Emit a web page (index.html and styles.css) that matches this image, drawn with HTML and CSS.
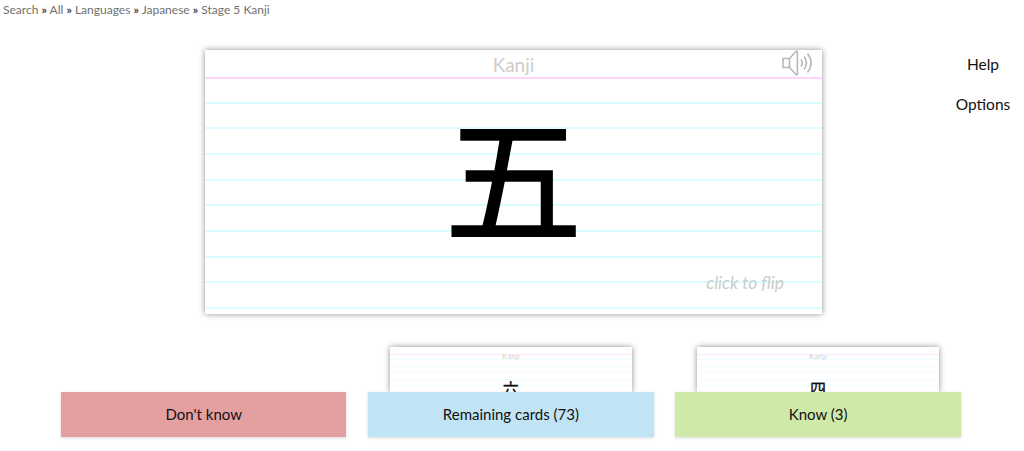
FILE: index.html
```html
<!DOCTYPE html>
<html>
  <head>
    <link rel="stylesheet" href="styles.css">
  </head>
  <body>
    <nav class="crumbs">
      <a>Search</a> <b>»</b> <a>All</a> <b>»</b> <a>Languages</a> <b>»</b> <a>Japanese</a> <b>»</b> <a>Stage 5 Kanji</a>
    </nav>

    <main class="study">
      <section class="card">
        <div class="card-head">
          <span class="card-title">Kanji</span>
          <svg class="sound" width="31" height="26" viewBox="0 0 31 26" fill="none" stroke="#b8b8b8" stroke-width="1.6">
            <path d="M1 8.500h6.500v9H1z"/>
            <path d="M7.500 8.500L14 1.500c.8-.6 1.400-.2 1.400.8v21.400c0 1-.6 1.400-1.400.8l-6.500-7"/>
            <path d="M19 9.500c1.600 2.200 1.600 4.800 0 7"/>
            <path d="M22 6.500c3 4 3 9 0 13"/>
            <path d="M25.500 3.500c4.600 6 4.600 13 0 19"/>
          </svg>
        </div>
        <div class="card-body">
          <span class="kanji">五</span>
          <span class="flip">click to flip</span>
        </div>
      </section>
      <aside class="side">
        <a>Help</a>
        <a>Options</a>
      </aside>
    </main>

    <section class="piles">
      <div class="pile">
        <div class="mini mini-empty"></div>
        <button class="btn btn-no">Don't know</button>
      </div>
      <div class="pile">
        <div class="mini">
          <div class="mini-title">Kanji</div>
          <div class="mini-kanji">六</div>
        </div>
        <button class="btn btn-left">Remaining cards (73)</button>
      </div>
      <div class="pile">
        <div class="mini">
          <div class="mini-title">Kanji</div>
          <div class="mini-kanji">四</div>
        </div>
        <button class="btn btn-yes">Know (3)</button>
      </div>
    </section>
  </body>
</html>
```

FILE: styles.css
```css
* {
  margin: 0;
  padding: 0;
  box-sizing: border-box;
}

html, body {
  height: 100%;
  overflow: hidden;
}

body {
  font-family: "Lato", "Noto Sans CJK JP", sans-serif;
  font-size: 15.5px;
  color: #111;
  background: #fff;
}

.crumbs {
  height: 50px;
  padding: 2px 0 0 3px;
  font-size: 12px;
  line-height: 16px;
  color: #707070;
}

.crumbs b {
  color: #444;
}

.study {
  display: flex;
  padding-left: 205px;
  height: 297px;
}

.card {
  width: 617px;
  height: 264px;
  background: #fff;
  box-shadow: 0 0 6px rgba(0, 0, 0, .45);
}

.card-head {
  position: relative;
  height: 29px;
  text-align: center;
  border-bottom: 2px solid #fdd4fb;
}

.card-title {
  font-size: 19px;
  line-height: 29px;
  color: #ccc;
}

.sound {
  position: absolute;
  top: 0;
  right: 9px;
}

.card-body {
  position: relative;
  height: 235px;
  text-align: center;
  background: repeating-linear-gradient(to bottom, transparent 0, transparent 22.67px, #d8feff 22.67px, #d8feff 24.67px, transparent 24.67px, transparent 25.67px);
}

.kanji {
  display: block;
  font-family: "Noto Sans CJK JP", sans-serif;
  font-size: 138px;
  line-height: 186px;
  color: #000;
  -webkit-text-stroke: 1.5px #000;
}

.flip {
  position: absolute;
  right: 38px;
  bottom: 21px;
  font-size: 17.4px;
  font-style: italic;
  color: #ccc;
}

.side {
  display: flex;
  flex-direction: column;
  align-items: center;
  gap: 20px;
  margin-left: auto;
  width: 68px;
  margin-right: 7px;
  padding-top: 4px;
  line-height: 20px;
}

.piles {
  display: grid;
  grid-template-columns: repeat(3, 285.4px);
  gap: 21.8px;
  padding-left: 61px;
}

.pile {
  display: flex;
  flex-direction: column;
  align-items: center;
}

.mini {
  width: 242px;
  height: 45px;
  overflow: hidden;
  text-align: center;
  box-shadow: 0 0 6px rgba(0, 0, 0, .45);
  background: repeating-linear-gradient(to bottom, transparent 0, transparent 5.5px, #eefefe 5.5px, #eefefe 6.5px);
  border-top: 7px solid #fff;
}

.mini-empty {
  visibility: hidden;
}

.mini-title {
  height: 4px;
  border-top: 1px solid #fde8fb;
  font-size: 8px;
  line-height: 3px;
  color: #d2d2d2;
}

.mini-kanji {
  padding-top: 20px;
  font-family: "Noto Sans CJK JP", sans-serif;
  font-size: 16px;
  line-height: 20px;
  color: #111;
  -webkit-text-stroke: .3px #111;
}

.btn {
  position: relative;
  width: 100%;
  height: 45px;
  padding-bottom: 2px;
  border: none;
  font-family: inherit;
  font-size: 15px;
  color: #111;
  box-shadow: 0 1px 3px rgba(0, 0, 0, .15);
}

.btn-no {
  background: #e4a0a1;
}

.btn-left {
  background: #c1e4f5;
}

.btn-yes {
  background: #cfeaa8;
}
```
